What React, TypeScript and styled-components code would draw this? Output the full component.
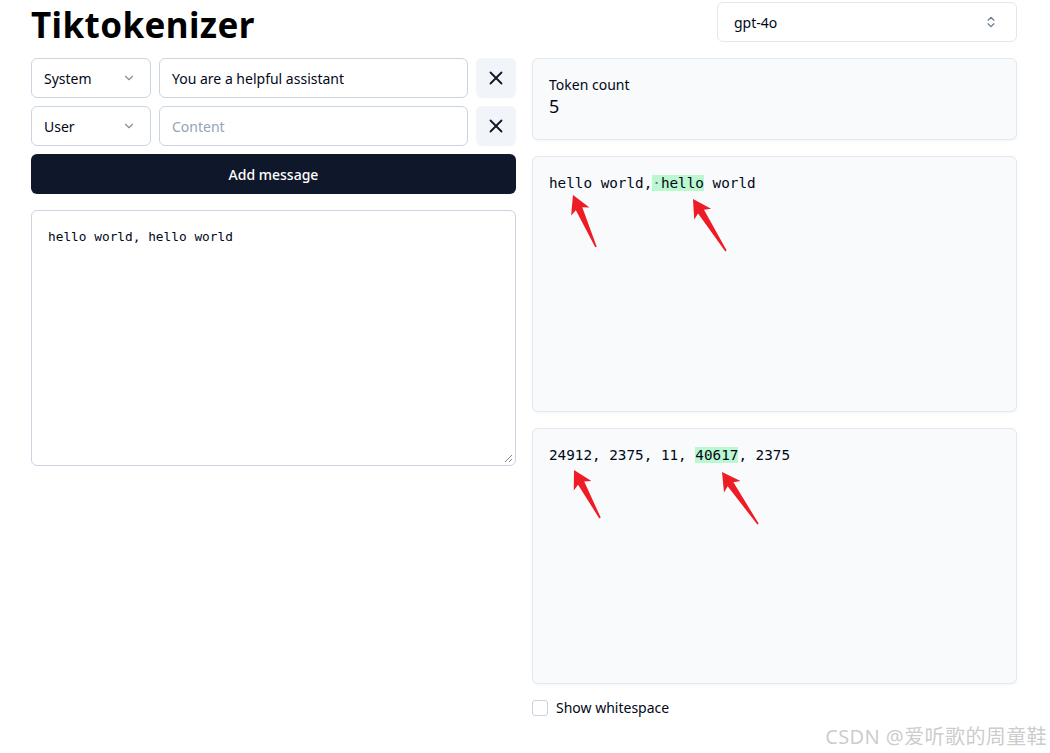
import React from "react";
import styled, { createGlobalStyle } from "styled-components";

const Global = createGlobalStyle`
  html, body { margin: 0; padding: 0; background: #fff; }
  body { font-family: "Noto Sans", "Open Sans", sans-serif; color: #020817; }
  * { box-sizing: border-box; }
`;

const Page = styled.div`
  position: relative;
  width: 1050px;
  height: 753px;
  overflow: hidden;
  padding: 0 33px 0 31px;
`;

const Header = styled.header`
  display: flex;
  align-items: flex-start;
  justify-content: space-between;
  height: 44px;
  margin-bottom: 14px;
`;

const Title = styled.h1`
  margin: 6.5px 0 0;
  font-size: 35px;
  line-height: 35px;
  font-weight: 700;
  letter-spacing: 0.4px;
  color: #000;
`;

const ModelSelect = styled.div`
  margin-top: 2px;
  width: 300px;
  height: 40px;
  border: 1px solid #e2e8f0;
  border-radius: 6px;
  display: flex;
  align-items: center;
  justify-content: space-between;
  padding: 0 18px 0 16px;
  font-size: 14px;
`;

const Grid = styled.main`
  display: grid;
  grid-template-columns: 485px 485px;
  gap: 16px;
  align-items: start;
`;

const Column = styled.section`
  display: flex;
  flex-direction: column;
  gap: 8px;
`;

const MessageRow = styled.div`
  display: flex;
  gap: 8px;
`;

const RoleSelect = styled.div`
  width: 120px;
  height: 40px;
  flex: none;
  border: 1px solid #cbd5e1;
  border-radius: 6px;
  display: flex;
  align-items: center;
  justify-content: space-between;
  padding: 0 14px 0 12px;
  font-size: 14px;
`;

const TextInput = styled.div<{ $placeholder?: boolean }>`
  flex: 1;
  height: 40px;
  border: 1px solid #cbd5e1;
  border-radius: 6px;
  display: flex;
  align-items: center;
  padding: 0 12px;
  font-size: 14px;
  color: ${(p) => (p.$placeholder ? "#94a3b8" : "#020817")};
`;

const IconButton = styled.button`
  width: 40px;
  height: 40px;
  flex: none;
  border: none;
  border-radius: 6px;
  background: #f1f5f9;
  display: flex;
  align-items: center;
  justify-content: center;
  padding: 0;
  color: #0f172a;
`;

const PrimaryButton = styled.button`
  height: 40px;
  border: none;
  border-radius: 6px;
  background: #0f172a;
  color: #fff;
  font-family: "Noto Sans", sans-serif;
  font-size: 14px;
  font-weight: 500;
`;

const TextArea = styled.div`
  position: relative;
  margin-top: 8px;
  height: 256px;
  border: 1px solid #cbd5e1;
  border-radius: 6px;
  padding: 16px 16px;
  font-family: "DejaVu Sans Mono", monospace;
  font-size: 12.8px;
  line-height: 20px;
`;

const Grip = styled.svg`
  position: absolute;
  right: 2px;
  bottom: 2px;
`;

const RightColumn = styled.section`
  display: flex;
  flex-direction: column;
  gap: 16px;
`;

const Card = styled.div<{ $h?: number }>`
  position: relative;
  background: #f8fafc;
  border: 1px solid #e2e8f0;
  border-radius: 6px;
  box-shadow: 0 1px 2px rgba(0, 0, 0, 0.04);
  padding: 16px 16px 19px;
  height: ${(p) => (p.$h ? `${p.$h}px` : "auto")};
`;

const CountLabel = styled.div`
  font-size: 14px;
  line-height: 20px;
  color: #020817;
`;

const CountValue = styled.div`
  font-size: 18px;
  line-height: 28px;
  margin-top: -3px;
`;

const Mono = styled.pre`
  margin: 0;
  font-family: "DejaVu Sans Mono", monospace;
  font-size: 14.3px;
  line-height: 21px;
  white-space: pre-wrap;
`;

const Hl = styled.span`
  background: #bbf7d0;
`;

const Dot = styled.span`
  color: #64748b;
`;

const CheckRow = styled.label`
  display: flex;
  align-items: center;
  gap: 8px;
  font-size: 14px;
  margin-top: -2px;
`;

const Box = styled.span`
  width: 16px;
  height: 16px;
  border: 1px solid #cbd5e1;
  border-radius: 3px;
  background: #fff;
`;

const Arrow = styled.svg`
  position: absolute;
  overflow: visible;
  pointer-events: none;
`;

const Watermark = styled.div`
  position: absolute;
  right: 3px;
  bottom: 3px;
  font-family: "Noto Sans", "Noto Sans CJK SC", sans-serif;
  font-size: 20px;
  line-height: 26px;
  color: rgba(160, 160, 160, 0.55);
  letter-spacing: 0.4px;
`;

const Chevron = () => (
  <svg width="14" height="14" viewBox="0 0 24 24" fill="none" stroke="#64748b" strokeWidth="2" strokeLinecap="round" strokeLinejoin="round" opacity="0.8">
    <path d="m6 9 6 6 6-6" />
  </svg>
);

const ChevronsUpDown = () => (
  <svg width="14" height="14" viewBox="0 0 24 24" fill="none" stroke="#64748b" strokeWidth="2" strokeLinecap="round" strokeLinejoin="round">
    <path d="m7 15 5 5 5-5" />
    <path d="m7 9 5-5 5 5" />
  </svg>
);

const XIcon = () => (
  <svg width="22" height="22" viewBox="0 0 24 24" fill="none" stroke="#0f172a" strokeWidth="2" strokeLinecap="round" strokeLinejoin="round">
    <path d="M18 6 6 18" />
    <path d="m6 6 12 12" />
  </svg>
);

// red annotation arrow: tip at (x,y), tail offset by (dx,dy)
const RedArrow = ({ x, y, dx, dy }: { x: number; y: number; dx: number; dy: number }) => {
  const len = Math.sqrt(dx * dx + dy * dy);
  const ang = (Math.atan2(dy, dx) * 180) / Math.PI;
  return (
    <Arrow style={{ left: x, top: y }} width="1" height="1">
      <g transform={`rotate(${ang})`}>
        <polygon
          points={`0,0 18,-10 15,-3.5 ${len},-0.8 ${len},0.8 15,3.5 18,10`}
          fill="#ee1c25"
        />
      </g>
    </Arrow>
  );
};

export default function App() {
  return (
    <>
      <Global />
      <Page>
        <Header>
          <Title>Tiktokenizer</Title>
          <ModelSelect>
            <span>gpt-4o</span>
            <ChevronsUpDown />
          </ModelSelect>
        </Header>
        <Grid>
          <Column>
            <MessageRow>
              <RoleSelect>
                <span>System</span>
                <Chevron />
              </RoleSelect>
              <TextInput>You are a helpful assistant</TextInput>
              <IconButton>
                <XIcon />
              </IconButton>
            </MessageRow>
            <MessageRow>
              <RoleSelect>
                <span>User</span>
                <Chevron />
              </RoleSelect>
              <TextInput $placeholder>Content</TextInput>
              <IconButton>
                <XIcon />
              </IconButton>
            </MessageRow>
            <PrimaryButton>Add message</PrimaryButton>
            <TextArea>
              hello world, hello world
              <Grip width="10" height="10" viewBox="0 0 10 10">
                <path d="M9 2 2 9M9 6 6 9" stroke="#888" strokeWidth="1" />
              </Grip>
            </TextArea>
          </Column>
          <RightColumn>
            <Card>
              <CountLabel>Token count</CountLabel>
              <CountValue>5</CountValue>
            </Card>
            <Card $h={256}>
              <Mono>
                hello world,<Hl><Dot>·</Dot>hello</Hl> world
              </Mono>
              <RedArrow x={40} y={38} dx={23} dy={52} />
              <RedArrow x={160} y={42} dx={33} dy={52} />
            </Card>
            <Card $h={256}>
              <Mono>
                24912, 2375, 11, <Hl>40617</Hl>, 2375
              </Mono>
              <RedArrow x={41} y={41} dx={26} dy={48} />
              <RedArrow x={189} y={43} dx={36} dy={52} />
            </Card>
            <CheckRow>
              <Box />
              Show whitespace
            </CheckRow>
          </RightColumn>
        </Grid>
        <Watermark>CSDN @爱听歌的周童鞋</Watermark>
      </Page>
    </>
  );
}
